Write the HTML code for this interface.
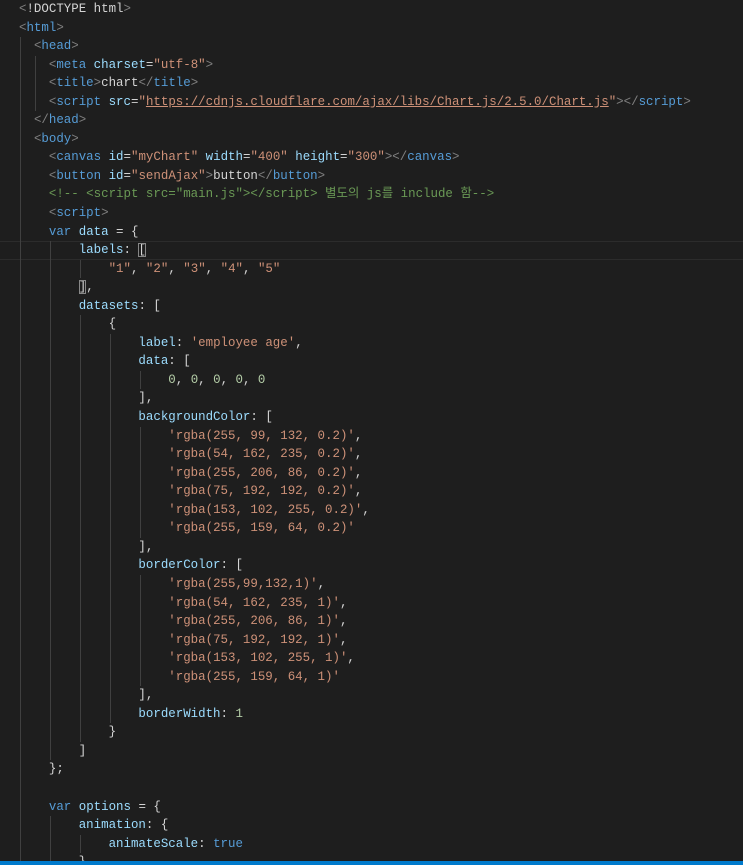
<!DOCTYPE html>
<html><head><meta charset="utf-8"><style>
html,body{margin:0;padding:0;background:#1e1e1e;width:743px;height:865px;overflow:hidden;position:relative}
#c{position:absolute;left:19px;top:0;width:724px;height:865px;overflow:hidden;font-family:"Liberation Mono","Noto Sans CJK KR",monospace;font-size:12.45px;color:#d4d4d4}
.l{position:relative;height:18.56px;line-height:18.56px;white-space:pre}
.cur{position:absolute;left:0;right:0;top:241px;height:17px;border-top:1px solid #2c2c2c;border-bottom:1px solid #2c2c2c}
.g{position:absolute;top:0;height:18.56px;width:1px;background:#404040}
.p{color:#808080}.t{color:#569cd6}.a{color:#9cdcfe}.s{color:#ce9178}.c{color:#6a9955}.n{color:#b5cea8}.k{color:#569cd6}
.u{text-decoration:underline}
.bm{outline:1px solid #888;outline-offset:-1px}
#sb{position:absolute;left:0;top:861px;width:743px;height:4px;background:#007acc}
</style></head><body>
<div class="cur"></div>
<div id="c">
<div class="l"><span class="p">&lt;</span>!DOCTYPE html<span class="p">&gt;</span></div>
<div class="l"><span class="p">&lt;</span><span class="t">html</span><span class="p">&gt;</span></div>
<div class="l">  <span class="p">&lt;</span><span class="t">head</span><span class="p">&gt;</span></div>
<div class="l">    <span class="p">&lt;</span><span class="t">meta</span> <span class="a">charset</span>=<span class="s">"utf-8"</span><span class="p">&gt;</span></div>
<div class="l">    <span class="p">&lt;</span><span class="t">title</span><span class="p">&gt;</span>chart<span class="p">&lt;/</span><span class="t">title</span><span class="p">&gt;</span></div>
<div class="l">    <span class="p">&lt;</span><span class="t">script</span> <span class="a">src</span>=<span class="s">"<span class="u">https://cdnjs.cloudflare.com/ajax/libs/Chart.js/2.5.0/Chart.js</span>"</span><span class="p">&gt;&lt;/</span><span class="t">script</span><span class="p">&gt;</span></div>
<div class="l">  <span class="p">&lt;/</span><span class="t">head</span><span class="p">&gt;</span></div>
<div class="l">  <span class="p">&lt;</span><span class="t">body</span><span class="p">&gt;</span></div>
<div class="l">    <span class="p">&lt;</span><span class="t">canvas</span> <span class="a">id</span>=<span class="s">"myChart"</span> <span class="a">width</span>=<span class="s">"400"</span> <span class="a">height</span>=<span class="s">"300"</span><span class="p">&gt;&lt;/</span><span class="t">canvas</span><span class="p">&gt;</span></div>
<div class="l">    <span class="p">&lt;</span><span class="t">button</span> <span class="a">id</span>=<span class="s">"sendAjax"</span><span class="p">&gt;</span>button<span class="p">&lt;/</span><span class="t">button</span><span class="p">&gt;</span></div>
<div class="l">    <span class="c">&lt;!-- &lt;script src="main.js"&gt;&lt;/script&gt; 별도의 js를 include 함--&gt;</span></div>
<div class="l">    <span class="p">&lt;</span><span class="t">script</span><span class="p">&gt;</span></div>
<div class="l">    <span class="k">var</span> <span class="a">data</span> = {</div>
<div class="l">        <span class="a">labels</span>: <span class="bm">[</span></div>
<div class="l">            <span class="s">"1"</span>, <span class="s">"2"</span>, <span class="s">"3"</span>, <span class="s">"4"</span>, <span class="s">"5"</span></div>
<div class="l">        <span class="bm">]</span>,</div>
<div class="l">        <span class="a">datasets</span>: [</div>
<div class="l">            {</div>
<div class="l">                <span class="a">label</span>: <span class="s">'employee age'</span>,</div>
<div class="l">                <span class="a">data</span>: [</div>
<div class="l">                    <span class="n">0</span>, <span class="n">0</span>, <span class="n">0</span>, <span class="n">0</span>, <span class="n">0</span></div>
<div class="l">                ],</div>
<div class="l">                <span class="a">backgroundColor</span>: [</div>
<div class="l">                    <span class="s">'rgba(255, 99, 132, 0.2)'</span>,</div>
<div class="l">                    <span class="s">'rgba(54, 162, 235, 0.2)'</span>,</div>
<div class="l">                    <span class="s">'rgba(255, 206, 86, 0.2)'</span>,</div>
<div class="l">                    <span class="s">'rgba(75, 192, 192, 0.2)'</span>,</div>
<div class="l">                    <span class="s">'rgba(153, 102, 255, 0.2)'</span>,</div>
<div class="l">                    <span class="s">'rgba(255, 159, 64, 0.2)'</span></div>
<div class="l">                ],</div>
<div class="l">                <span class="a">borderColor</span>: [</div>
<div class="l">                    <span class="s">'rgba(255,99,132,1)'</span>,</div>
<div class="l">                    <span class="s">'rgba(54, 162, 235, 1)'</span>,</div>
<div class="l">                    <span class="s">'rgba(255, 206, 86, 1)'</span>,</div>
<div class="l">                    <span class="s">'rgba(75, 192, 192, 1)'</span>,</div>
<div class="l">                    <span class="s">'rgba(153, 102, 255, 1)'</span>,</div>
<div class="l">                    <span class="s">'rgba(255, 159, 64, 1)'</span></div>
<div class="l">                ],</div>
<div class="l">                <span class="a">borderWidth</span>: <span class="n">1</span></div>
<div class="l">            }</div>
<div class="l">        ]</div>
<div class="l">    };</div>
<div class="l"> </div>
<div class="l">    <span class="k">var</span> <span class="a">options</span> = {</div>
<div class="l">        <span class="a">animation</span>: {</div>
<div class="l">            <span class="a">animateScale</span>: <span class="k">true</span></div>
<div class="l">        }</div>
</div>
<div id="sb"></div>
<script>
var ls=document.querySelectorAll('#c .l'),cw=7.47;
ls.forEach(function(el,i){
  var n=el.textContent.match(/^ */)[0].length;
  if(el.textContent.trim()===''&&i>0){n=4;}
  var cols=[];
  if(n>0)cols.push(0);
  if(i>=3&&i<=5)cols.push(2);
  if(i>=12){for(var c=4;c<n;c+=4)cols.push(c);}
  cols.forEach(function(c){var g=document.createElement('i');g.className='g';g.style.left=(c*cw+1)+'px';el.appendChild(g);});
});
</script>
</body></html>
